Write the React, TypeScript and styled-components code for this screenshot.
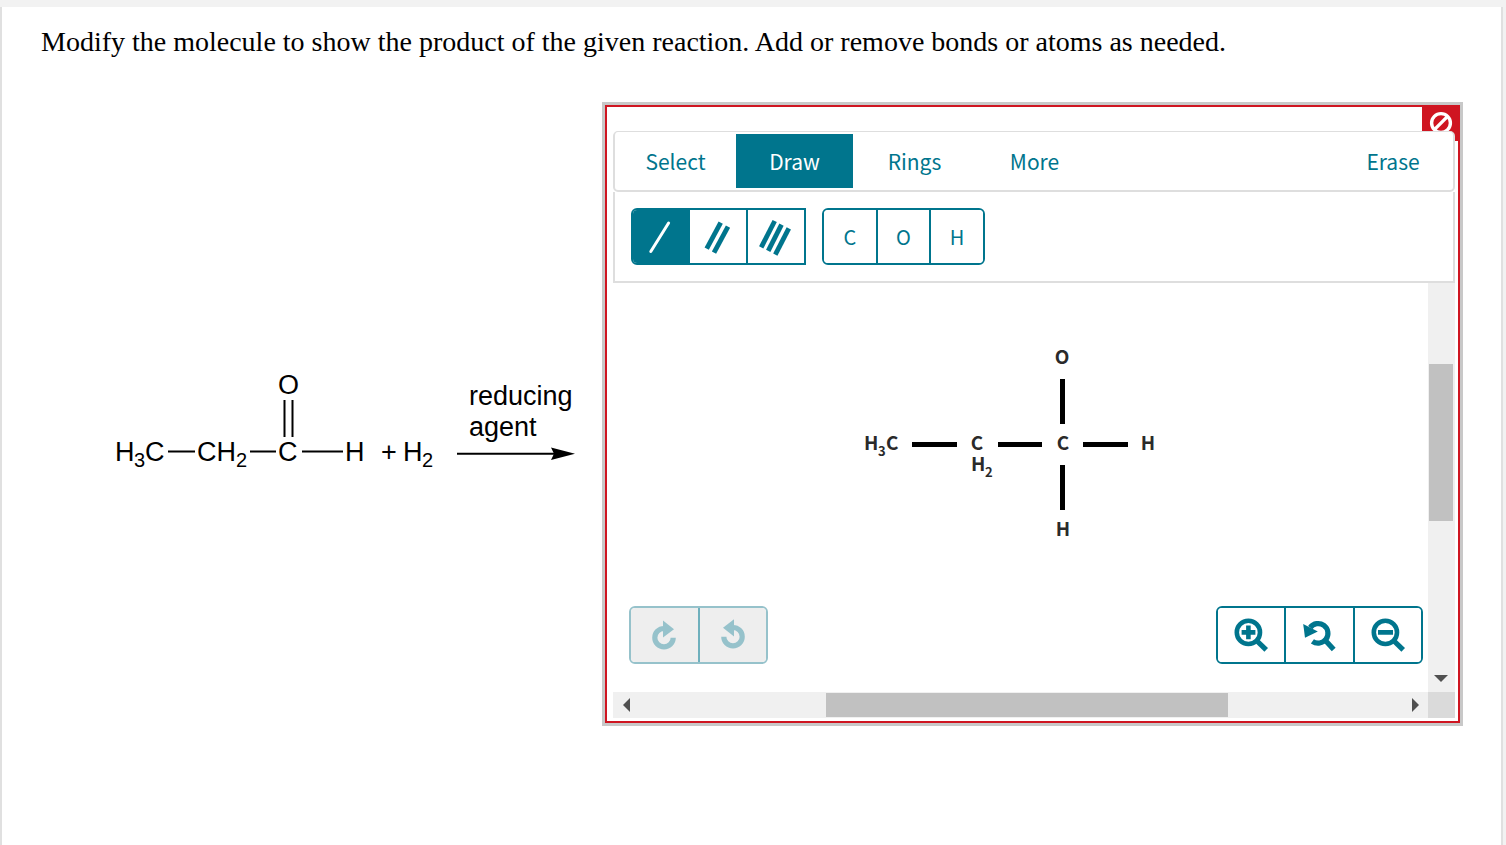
import React from "react";
import styled, { createGlobalStyle } from "styled-components";

const TEAL = "#00758d";
const LINE = "#dedede";
const RED = "#cf1521";
const UI_FONT = '"Noto Sans CJK SC", "Noto Sans", sans-serif';

const GlobalStyle = createGlobalStyle`
  *, *::before, *::after { box-sizing: border-box; }
  body { margin: 0; background: #f2f2f2; }
  button { font: inherit; cursor: pointer; }
  svg { display: block; flex: none; overflow: visible; }
`;

const Sheet = styled.main`
  min-height: calc(100vh - 7px);
  margin: 7px 3px 0 0;
  padding: 16px 38px 32px 39px;
  background: #fff;
  border: solid #e0e0e0;
  border-width: 0 2px;
`;

const Prompt = styled.h1`
  margin: 0 0 41px;
  font: 400 28px/38px "Liberation Serif", serif;
  color: #000;
`;

const Question = styled.div`
  display: grid;
  grid-template-columns: 561px minmax(0, 1fr);
  align-items: center;
`;

const Reaction = styled.svg`
  margin-left: 73px;
  font-family: "Liberation Sans", sans-serif;
  font-size: 27px;
`;

const Editor = styled.section`
  position: relative;
  margin: 3px;
  padding: 24px 3px 3px 6px;
  border: 2px solid ${RED};
  outline: 3px solid #c8c8c8;
  font-family: ${UI_FONT};
  color: ${TEAL};
`;

const StatusBadge = styled.div`
  position: absolute;
  top: -2px;
  right: -2px;
  display: flex;
  align-items: center;
  justify-content: center;
  width: 38px;
  height: 36px;
  background: ${RED};
`;

const TabBar = styled.nav`
  position: relative;
  display: flex;
  padding: 2px 0;
  background: #fff;
  border: 2px solid ${LINE};
  border-top-width: 1px;
  border-radius: 5px;
`;

const Tab = styled.button<{ $width: number; $active?: boolean; $end?: boolean }>`
  width: ${(p) => p.$width}px;
  height: 54px;
  margin-left: ${(p) => (p.$end ? "auto" : 0)};
  padding: 0;
  border: 0;
  background: ${(p) => (p.$active ? TEAL : "transparent")};
  color: ${(p) => (p.$active ? "#fff" : TEAL)};
  font-size: 21px;
  line-height: 30px;
`;

const ToolRow = styled.div`
  display: flex;
  gap: 16px;
  padding: 16px;
  border: solid ${LINE};
  border-width: 0 2px 2px;
`;

const Group = styled.div<{ $radius: string; $disabled?: boolean }>`
  display: flex;
  overflow: hidden;
  border: 2px solid ${(p) => (p.$disabled ? "#96c2cb" : TEAL)};
  border-radius: ${(p) => p.$radius};
`;

const GroupButton = styled.button<{ $width: number; $height: number; $active?: boolean }>`
  display: flex;
  align-items: center;
  justify-content: center;
  width: ${(p) => p.$width}px;
  height: ${(p) => p.$height}px;
  padding: 0;
  border: 0 solid ${(p) => (p.disabled ? "#6fb0bd" : TEAL)};
  background: ${(p) => (p.disabled ? "#eee" : p.$active ? TEAL : "#fff")};
  color: ${(p) => (p.disabled ? "#96c2cb" : p.$active ? "#fff" : TEAL)};
  font-size: 20px;
  line-height: 30px;

  &:not(:first-child) {
    border-left-width: 2px;
  }
`;

const Workspace = styled.div`
  display: grid;
  grid-template-columns: minmax(0, 1fr) 27px;
  grid-template-rows: auto 26px;
`;

const Canvas = styled.div`
  display: flex;
  flex-direction: column;
  justify-content: space-between;
  min-height: 409px;
  padding: 62px 5px 28px 16px;
`;

const Molecule = styled.svg`
  align-self: center;
  font-size: 19px;
  font-weight: 700;
`;

const Controls = styled.div`
  display: flex;
  justify-content: space-between;
`;

const VerticalTrack = styled.div`
  display: grid;
  grid-template-rows: 81fr 157fr 171fr;
  padding: 0 2px 0 1px;
  background: #f0f0f0;
`;

const HorizontalTrack = styled.div`
  display: grid;
  grid-template-columns: 213fr 402fr 200fr;
  padding: 1px 0;
  background: #f0f0f0;
`;

const Thumb = styled.div`
  background: #c1c1c1;
`;

const ArrowButton = styled.button<{ $place: "start" | "end" | "bottom" }>`
  display: flex;
  align-items: center;
  justify-content: center;
  width: ${(p) => (p.$place === "bottom" ? 24 : 26)}px;
  height: ${(p) => (p.$place === "bottom" ? 28 : 24)}px;
  padding: 0;
  border: 0;
  background: transparent;
  color: #505050;
  justify-self: ${(p) => (p.$place === "bottom" ? "center" : p.$place)};
  align-self: ${(p) => (p.$place === "bottom" ? "end" : "center")};
`;

const Corner = styled.div`
  background: #dadada;
`;

const BONDS = [
  { name: "Single", width: 55, lines: [[7.8, 32.5, 25.6, 4]] },
  {
    name: "Double",
    width: 58,
    lines: [
      [6.7, 29.7, 20.7, 3.7],
      [14, 33.7, 28, 7.7],
    ],
  },
  {
    name: "Triple",
    width: 58,
    lines: [
      [3.2, 28.3, 16.7, 2],
      [10.2, 31.9, 23.5, 5.7],
      [17.3, 35.7, 30.8, 9.3],
    ],
  },
];

const ATOMS = [
  { name: "C", width: 52 },
  { name: "O", width: 53 },
  { name: "H", width: 54 },
];

function BondIcon({ lines }: { lines: number[][] }) {
  const single = lines.length === 1;
  return (
    <svg width="36" height="36" viewBox="0 0 36 36" stroke="currentColor" strokeWidth={single ? 3 : 4.8} strokeLinecap={single ? "round" : "butt"}>
      {lines.map(([x1, y1, x2, y2]) => (
        <line key={x1} x1={x1} y1={y1} x2={x2} y2={y2} />
      ))}
    </svg>
  );
}

function RedoIcon() {
  return (
    <svg width="26" height="32" viewBox="1 0 26 32">
      <path d="M13 9.5 A9.2 9.2 0 1 0 22.2 18.7" fill="none" stroke="currentColor" strokeWidth="5.2" />
      <path d="M12 1.4 L23 10.2 L12 18.6 Z" fill="currentColor" />
    </svg>
  );
}

function UndoIcon() {
  return (
    <svg width="26" height="32" viewBox="0 0 26 32">
      <path d="M13 8.5 A9.2 9.2 0 1 1 3.8 17.7" fill="none" stroke="currentColor" strokeWidth="5.2" />
      <path d="M14 0.2 L3 8.8 L14 17.4 Z" fill="currentColor" />
    </svg>
  );
}

function ZoomIcon({ plus }: { plus?: boolean }) {
  return (
    <svg width="36" height="36" viewBox="0 0 36 36" fill="none" stroke="currentColor">
      <circle cx="15.4" cy="15.4" r="11.6" strokeWidth="4.6" />
      <path d="M23 23 L33.2 32.8" strokeWidth="5.2" />
      <path d={plus ? "M8.6 15.4 H22.4 M15.4 8.6 V22.2" : "M8 15.4 H23"} strokeWidth="4.6" />
    </svg>
  );
}

function ZoomResetIcon() {
  return (
    <svg width="36" height="36" viewBox="0 0 36 36" fill="none" stroke="currentColor">
      <path d="M8.2 10.6 A9.8 9.8 0 1 1 10.4 24.3" strokeWidth="5.2" />
      <path d="M23 23 L31.7 32.5" strokeWidth="5.2" />
      <path d="M1.2 7 L15.8 14.4 L3 20.8 Z" fill="currentColor" stroke="none" />
    </svg>
  );
}

const ARROWS = { start: "M0 7 L7 0 V14 Z", end: "M7 7 L0 0 V14 Z", bottom: "M0 0 H14 L7 7 Z" };

function ScrollArrow({ place, label }: { place: "start" | "end" | "bottom"; label: string }) {
  const flat = place === "bottom";
  return (
    <ArrowButton type="button" $place={place} aria-label={label}>
      <svg width={flat ? 14 : 7} height={flat ? 7 : 14}>
        <path d={ARROWS[place]} fill="currentColor" />
      </svg>
    </ArrowButton>
  );
}

function ReactionScheme() {
  return (
    <Reaction width="462" height="128" viewBox="114 350 462 128" role="img" aria-label="Propanal plus hydrogen with a reducing agent">
      <text x="115" y="461">H</text>
      <text x="134" y="467" fontSize="20">3</text>
      <text x="145" y="461">C</text>
      <text x="197" y="461">CH</text>
      <text x="236" y="467" fontSize="20">2</text>
      <text x="278" y="461">C</text>
      <text x="278" y="394">O</text>
      <text x="345" y="461">H</text>
      <text x="381" y="461">+</text>
      <text x="403" y="461">H</text>
      <text x="422" y="467" fontSize="20">2</text>
      <text x="469" y="405">reducing</text>
      <text x="469" y="436">agent</text>
      <g stroke="#000" strokeWidth="2">
        <path d="M168 451.5 H195 M250 451.5 H276 M302 451.5 H343 M284.5 400 V437 M292.5 400 V437" />
        <path d="M457 453.7 H556" />
      </g>
      <path d="M551 447.5 L575 453.7 L551 460 L554 453.7 Z" />
    </Reaction>
  );
}

function MoleculeDrawing() {
  return (
    <Molecule width="332" height="200" viewBox="860 345 332 200" fill="#2a2a2a" role="img" aria-label="Molecule being edited">
      <text x="864" y="450">H</text>
      <text x="878" y="456" fontSize="13">3</text>
      <text x="886" y="450">C</text>
      <text x="977" y="450" textAnchor="middle">C</text>
      <text x="971" y="471">H</text>
      <text x="985" y="477" fontSize="13">2</text>
      <text x="1063" y="450" textAnchor="middle">C</text>
      <text x="1062" y="364" textAnchor="middle">O</text>
      <text x="1063" y="536" textAnchor="middle">H</text>
      <text x="1148" y="450" textAnchor="middle">H</text>
      <path d="M912 444.5 H957 M998 444.5 H1042 M1083 444.5 H1128 M1062.5 379 V424 M1062.5 465 V510" stroke="#000" strokeWidth="5" />
    </Molecule>
  );
}

export default function App() {
  return (
    <>
      <GlobalStyle />
      <Sheet>
        <Prompt>Modify the molecule to show the product of the given reaction. Add or remove bonds or atoms as needed.</Prompt>
        <Question>
          <ReactionScheme />
          <Editor>
            <StatusBadge>
              <svg width="24" height="24" viewBox="0 0 24 24" fill="none" stroke="#fff" strokeWidth="3.4">
                <circle cx="12" cy="12" r="9.4" />
                <path d="M5.4 18.6 L18.6 5.4" />
              </svg>
            </StatusBadge>
            <TabBar>
              <Tab type="button" $width={121}>Select</Tab>
              <Tab type="button" $width={117} $active>Draw</Tab>
              <Tab type="button" $width={123}>Rings</Tab>
              <Tab type="button" $width={117}>More</Tab>
              <Tab type="button" $width={120} $end>Erase</Tab>
            </TabBar>
            <ToolRow>
              <Group $radius="6px 0 0 6px">
                {BONDS.map((bond) => (
                  <GroupButton key={bond.name} type="button" $width={bond.width} $height={53} $active={bond.name === "Single"} aria-label={`${bond.name} bond`}>
                    <BondIcon lines={bond.lines} />
                  </GroupButton>
                ))}
              </Group>
              <Group $radius="6px">
                {ATOMS.map((atom) => (
                  <GroupButton key={atom.name} type="button" $width={atom.width} $height={53}>{atom.name}</GroupButton>
                ))}
              </Group>
            </ToolRow>
            <Workspace>
              <Canvas>
                <MoleculeDrawing />
                <Controls>
                  <Group $radius="6px" $disabled>
                    <GroupButton type="button" $width={67} $height={54} disabled aria-label="Redo"><RedoIcon /></GroupButton>
                    <GroupButton type="button" $width={68} $height={54} disabled aria-label="Undo"><UndoIcon /></GroupButton>
                  </Group>
                  <Group $radius="6px">
                    <GroupButton type="button" $width={66} $height={54} aria-label="Zoom in"><ZoomIcon plus /></GroupButton>
                    <GroupButton type="button" $width={69} $height={54} aria-label="Reset zoom"><ZoomResetIcon /></GroupButton>
                    <GroupButton type="button" $width={68} $height={54} aria-label="Zoom out"><ZoomIcon /></GroupButton>
                  </Group>
                </Controls>
              </Canvas>
              <VerticalTrack>
                <span />
                <Thumb />
                <ScrollArrow place="bottom" label="Scroll down" />
              </VerticalTrack>
              <HorizontalTrack>
                <ScrollArrow place="start" label="Scroll left" />
                <Thumb />
                <ScrollArrow place="end" label="Scroll right" />
              </HorizontalTrack>
              <Corner />
            </Workspace>
          </Editor>
        </Question>
      </Sheet>
    </>
  );
}
